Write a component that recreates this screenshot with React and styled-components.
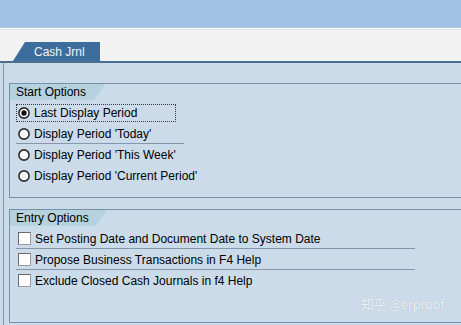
import styled, { createGlobalStyle } from 'styled-components';

const GlobalStyle = createGlobalStyle`
  html, body {
    margin: 0;
    padding: 0;
    overflow: hidden;
    background: #cbdbe9;
    font-family: "Liberation Sans", Arial, sans-serif;
  }
`;

const Screen = styled.div`
  display: flex;
  flex-direction: column;
  height: 100vh;
  position: relative;
`;
const TitleBar = styled.div`
  height: 27px;
  background: #a3c1e4;
  border-bottom: 1px solid #b0c4dc;
`;
const TitleEdge = styled.div`
  height: 1px;
  background: #fbfcfd;
  border-bottom: 1px solid #d6e4ee;
`;
const TabStrip = styled.div`
  height: 31px;
  display: flex;
  align-items: flex-end;
  padding-left: 13px;
  background: #f2f2f2;
  border-bottom: 2px solid #4a6e90;
`;
const Tab = styled.div`
  height: 19px;
  width: 87px;
  box-sizing: border-box;
  padding-left: 21px;
  display: flex;
  align-items: center;
  background: #3c6d9d;
  color: #eef4fa;
  font-size: 12px;
  clip-path: polygon(12px 0, 100% 0, 100% 100%, 0 100%);
`;
const Panel = styled.div`
  flex: 1;
  min-height: 0;
  overflow: hidden;
  margin-left: 3px;
  border-left: 1px solid #7f98b0;
  padding: 20px 0 2px 5px;
  display: flex;
  flex-direction: column;
  gap: 11px;
`;
const Group = styled.div`
  margin-right: -6px;
  border: 1px solid #7891aa;
  padding-bottom: ${({ $pad }) => $pad}px;
  flex: ${({ $grow }) => ($grow ? 1 : 'none')};
  display: flex;
  flex-direction: column;
`;
const GroupTitle = styled.div`
  height: 16px;
  width: ${({ $w }) => $w}px;
  box-sizing: border-box;
  padding-left: 6px;
  display: flex;
  align-items: center;
  background: #b6d2df;
  color: #000;
  font-size: 12px;
  clip-path: polygon(0 0, 100% 0, calc(100% - 11px) 100%, 0 100%);
`;
const Rows = styled.div`
  margin-top: 3px;
  margin-left: 6px;
  display: flex;
  flex-direction: column;
`;
const Row = styled.div`
  width: ${({ $w }) => $w}px;
  height: 19px;
  margin-bottom: 1px;
  border-bottom: 1px solid ${({ $line }) => ($line ? '#8597aa' : 'transparent')};
  display: flex;
  align-items: center;
  white-space: nowrap;
  font-size: 12px;
  color: #000;
`;
const Focus = styled.div`
  display: flex;
  align-items: center;
  gap: 4px;
  height: 18px;
  width: ${({ $on }) => ($on ? '160px' : 'auto')};
  box-sizing: border-box;
  border: 1px dotted ${({ $on }) => ($on ? '#3a3a3a' : 'transparent')};
  padding-left: 1px;
`;
const Check = styled.span`
  flex: none;
  width: 13px;
  height: 13px;
  box-sizing: border-box;
  margin: 0 4px 0 2px;
  background: #fff;
  border: 1px solid #6a6a6a;
  border-right-color: #9a9a9a;
  border-bottom-color: #9a9a9a;
`;
const Watermark = styled.div`
  position: absolute;
  right: 17px;
  bottom: 12px;
  font-family: "Noto Sans CJK SC", "Liberation Sans", sans-serif;
  font-size: 13px;
  color: rgba(255, 255, 255, 0.85);
  text-shadow: 0 0 1px #9aa9b8;
  letter-spacing: -0.3px;
`;

function Radio({ on }) {
  return (
    <svg width="12" height="12" viewBox="0 0 12 12" style={{ flex: 'none' }}>
      <circle cx="6" cy="6" r="5.1" fill="#fff" stroke="#2e2e2e" strokeWidth="1.6" />
      {on && <circle cx="6" cy="6" r="2.7" fill="#111" />}
    </svg>
  );
}

const starts = [
  { label: 'Last Display Period', on: true },
  { label: "Display Period 'Today'", line: true },
  { label: "Display Period 'This Week'" },
  { label: "Display Period 'Current Period'" },
];

const entries = [
  { label: 'Set Posting Date and Document Date to System Date', line: true },
  { label: 'Propose Business Transactions in F4 Help', line: true },
  { label: 'Exclude Closed Cash Journals in f4 Help' },
];

export default function App() {
  return (
    <Screen>
      <GlobalStyle />
      <TitleBar />
      <TitleEdge />
      <TabStrip>
        <Tab>Cash Jrnl</Tab>
      </TabStrip>
      <Panel>
        <Group $pad={10}>
          <GroupTitle $w={95}>Start Options</GroupTitle>
          <Rows>
            {starts.map((r) => (
              <Row key={r.label} $w={168} $line={r.line}>
                <Focus $on={r.on}>
                  <Radio on={r.on} />
                  {r.label}
                </Focus>
              </Row>
            ))}
          </Rows>
        </Group>
        <Group $grow>
          <GroupTitle $w={97}>Entry Options</GroupTitle>
          <Rows>
            {entries.map((r) => (
              <Row key={r.label} $w={399} $line={r.line}>
                <Check />
                {r.label}
              </Row>
            ))}
          </Rows>
        </Group>
      </Panel>
      <Watermark>知乎 @erproof</Watermark>
    </Screen>
  );
}
